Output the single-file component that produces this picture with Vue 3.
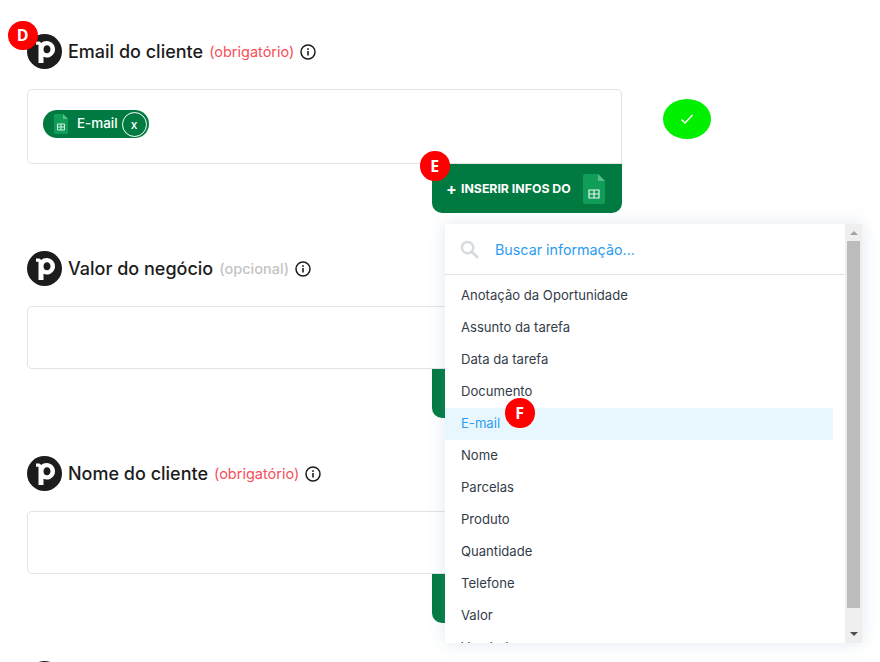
<script setup>
const sections = [
  { title: 'Email do cliente', note: '(obrigatório)', req: true, filled: true },
  { title: 'Valor do negócio', note: '(opcional)', req: false },
  { title: 'Nome do cliente', note: '(obrigatório)', req: true },
  { title: '', note: '', req: false, last: true }
]
const items = ['Anotação da Oportunidade', 'Assunto da tarefa', 'Data da tarefa', 'Documento', 'E-mail', 'Nome', 'Parcelas', 'Produto', 'Quantidade', 'Telefone', 'Valor', 'Vendedor']
</script>

<template>
  <div class="page">
    <section v-for="(s, i) in sections" :key="i" class="field" :class="{ first: i === 0 }">
      <div class="head">
        <svg class="logo" viewBox="0 0 35 35">
          <circle cx="17.5" cy="17.5" r="17.5" fill="#1c1c1c" />
          <path fill-rule="evenodd" d="M9 7.500h2.500c1.200 0 2.200.5 2.600 1.600C15.400 7.900 17.400 7 19.600 7c4.900 0 8.400 3.700 8.400 8.200s-3.500 8.300-8.400 8.300c-1.300 0-2.300-.3-3.100-.8V29h-5V11.300c0-.4-.1-.5-.5-.5H9zM20 11.200c-2.200 0-3.500 1.700-3.500 4.100s1.300 4 3.500 4 3.500-1.700 3.500-4-1.300-4.100-3.500-4.100z" fill="#fff" />
        </svg>
        <template v-if="!s.last">
          <h2 class="title">{{ s.title }}</h2>
          <span class="note" :class="{ req: s.req }">{{ s.note }}</span>
          <svg class="info" viewBox="0 0 16 16">
            <circle cx="8" cy="8" r="7" fill="none" stroke="#1c1c1c" stroke-width="1.500" />
            <rect x="7.200" y="7" width="1.600" height="4.500" fill="#1c1c1c" />
            <rect x="7.200" y="4.200" width="1.600" height="1.700" fill="#1c1c1c" />
          </svg>
        </template>
      </div>
      <template v-if="!s.last">
        <div class="box" :class="{ tall: s.filled }">
          <span v-if="s.filled" class="pill">
            <svg class="sheet small" viewBox="0 0 14 20">
              <path d="M0 1.500A1.500 1.500 0 0 1 1.500 0H9l5 5v13.500a1.500 1.500 0 0 1-1.500 1.500h-11A1.500 1.500 0 0 1 0 18.500z" fill="#0f9d58" />
              <path d="M9 0l5 5H9z" fill="#57bb8a" />
              <path d="M3.500 10h7v6h-7zM7 10v6M3.500 13h7" fill="none" stroke="#d5f0e2" stroke-width="1" />
            </svg>
            <span class="pill-label">E-mail</span>
            <span class="pill-x">x</span>
          </span>
          <span v-if="s.filled" class="ok">
            <svg width="14" height="12" viewBox="0 0 14 12"><path d="M1.500 6.500l3.500 3.500 7.500-8" fill="none" stroke="#fff" stroke-width="1.500" /></svg>
          </span>
        </div>
        <div class="insert">
          <span class="plus">+</span>
          <span class="insert-label">INSERIR INFOS DO</span>
          <svg class="sheet" viewBox="0 0 22 30">
            <path d="M0 2a2 2 0 0 1 2-2h13l7 7v21a2 2 0 0 1-2 2H2a2 2 0 0 1-2-2z" fill="#0f9d58" />
            <path d="M15 0l7 7h-7z" fill="#57bb8a" />
            <path d="M6 16h10v8H6zM11 16v8M6 20h10" fill="none" stroke="#e8f5ee" stroke-width="1.200" />
          </svg>
          <span v-if="i === 0" class="badge badge-e">E</span>
        </div>
      </template>
      <span v-if="i === 0" class="badge badge-d">D</span>
    </section>

    <div class="menu">
      <div class="menu-main">
        <div class="search">
          <svg class="lens" viewBox="0 0 20 20">
            <circle cx="8" cy="8" r="6" fill="none" stroke="#d3dce0" stroke-width="2.600" />
            <path d="M12.500 12.500l5.500 5.500" stroke="#d3dce0" stroke-width="3" stroke-linecap="round" />
          </svg>
          <span class="search-text">Buscar informação...</span>
        </div>
        <ul class="list">
          <li v-for="it in items" :key="it" :class="{ active: it === 'E-mail' }">{{ it }}</li>
        </ul>
        <span class="badge badge-f">F</span>
      </div>
      <div class="scroll">
        <span class="arrow up"></span>
        <div class="track"><div class="thumb"></div></div>
        <span class="arrow down"></span>
      </div>
    </div>
  </div>
</template>

<style>
html, body { margin: 0; background: #fff; overflow: hidden; }
</style>

<style scoped>
.page {
  position: relative;
  width: 880px;
  height: 662px;
  overflow: hidden;
  padding: 34px 0 0 27px;
  box-sizing: border-box;
  font-family: Inter, "Liberation Sans", sans-serif;
  color: #1c1c1c;
}
.field {
  position: relative;
  width: 595px;
  margin-bottom: 38px;
}
.head {
  display: flex;
  align-items: center;
  height: 35px;
}
.logo { width: 35px; height: 35px; flex: none; }
.title {
  margin: 0 0 0 6px;
  font-size: 18px;
  font-weight: 500;
  line-height: 35px;
}
.note {
  margin-left: 6px;
  font-size: 14.500px;
  font-weight: 500;
  color: #c4c4c4;
}
.note.req { color: #f5505a; font-weight: 400; }
.info { width: 16px; height: 16px; margin-left: 6px; }
.box {
  position: relative;
  box-sizing: border-box;
  height: 63px;
  margin-top: 20px;
  border: 1px solid #e2e2e2;
  border-radius: 5px 5px 0 5px;
  background: #fff;
}
.box.tall { height: 75px; padding: 20px 15px; }
.pill {
  display: inline-flex;
  align-items: center;
  height: 28px;
  width: 106px;
  box-sizing: border-box;
  border-radius: 14px;
  background: #007a40;
  color: #fff;
  padding-left: 11px;
}
.sheet.small { width: 14px; height: 20px; flex: none; }
.pill-label { margin-left: 9px; font-size: 13.400px; font-weight: 500; position: relative; top: -1px; }
.pill-x {
  box-sizing: border-box;
  width: 25px;
  height: 25px;
  margin-left: 4px;
  flex: none;
  border: 1px solid #fff;
  border-radius: 50%;
  display: flex;
  align-items: center;
  justify-content: center;
  font-size: 12px;
  font-weight: 500;
}
.ok {
  position: absolute;
  left: 635px;
  top: 9px;
  width: 48px;
  height: 40px;
  border-radius: 50%;
  background: #00f000;
  display: flex;
  align-items: center;
  justify-content: center;
}
.insert {
  position: relative;
  display: flex;
  align-items: center;
  box-sizing: border-box;
  width: 190px;
  height: 49px;
  margin-left: auto;
  padding-left: 14px;
  background: #007a40;
  border-radius: 0 0 10px 10px;
  color: #fff;
}
.plus { font-size: 16px; font-weight: 700; width: 15px; }
.insert-label { font-size: 12.300px; font-weight: 700; white-space: nowrap; }
.insert .sheet { width: 22px; height: 30px; margin-left: 12px; flex: none; }
.badge {
  position: absolute;
  width: 29.500px;
  height: 29.500px;
  border-radius: 50%;
  background: #fe0000;
  color: #fff;
  font-family: "Open Sans", sans-serif;
  font-size: 16px;
  font-weight: 700;
  display: flex;
  align-items: center;
  justify-content: center;
}
.badge-d { left: -19px; top: -13.500px; }
.badge-e { left: -12px; top: -13px; }
.badge-f { left: 60px; top: 174px; }
.menu {
  position: absolute;
  left: 445px;
  top: 224px;
  width: 417px;
  height: 419px;
  display: flex;
  background: #fff;
  box-shadow: 0 0 16px rgba(120, 150, 190, 0.22);
  overflow: visible;
}
.menu-main {
  position: relative;
  flex: 1;
  min-width: 0;
  overflow: hidden;
}
.search {
  display: flex;
  align-items: center;
  height: 51px;
  border-bottom: 1px solid #e2e2e2;
  width: 401px;
  padding-left: 15px;
  box-sizing: border-box;
  margin-bottom: 5px;
}
.lens { width: 19px; height: 19px; flex: none; }
.search-text { margin-left: 16px; font-size: 14.300px; color: #2b9cf2; }
.list { list-style: none; margin: 0; padding: 0; width: 388px; }
.list li {
  height: 32px;
  line-height: 30px;
  padding-left: 16px;
  font-size: 13.100px;
  color: #333c48;
}
.list li.active { background: #e8f7fe; color: #2b9cf2; }
.scroll {
  width: 17px;
  background: #efefef;
  display: flex;
  flex-direction: column;
  align-items: center;
  flex: none;
  padding-top: 7px;
  box-sizing: border-box;
}
.arrow { width: 0; height: 0; border-left: 4px solid transparent; border-right: 4px solid transparent; flex: none; }
.arrow.up { border-bottom: 4px solid #a3a3a3; }
.arrow.down { border-top: 4px solid #505050; margin-bottom: 7px; }
.track { flex: 1; width: 100%; display: flex; justify-content: center; padding-top: 6px; }
.thumb { width: 13px; height: 367px; background: #bcbcbc; }
</style>
